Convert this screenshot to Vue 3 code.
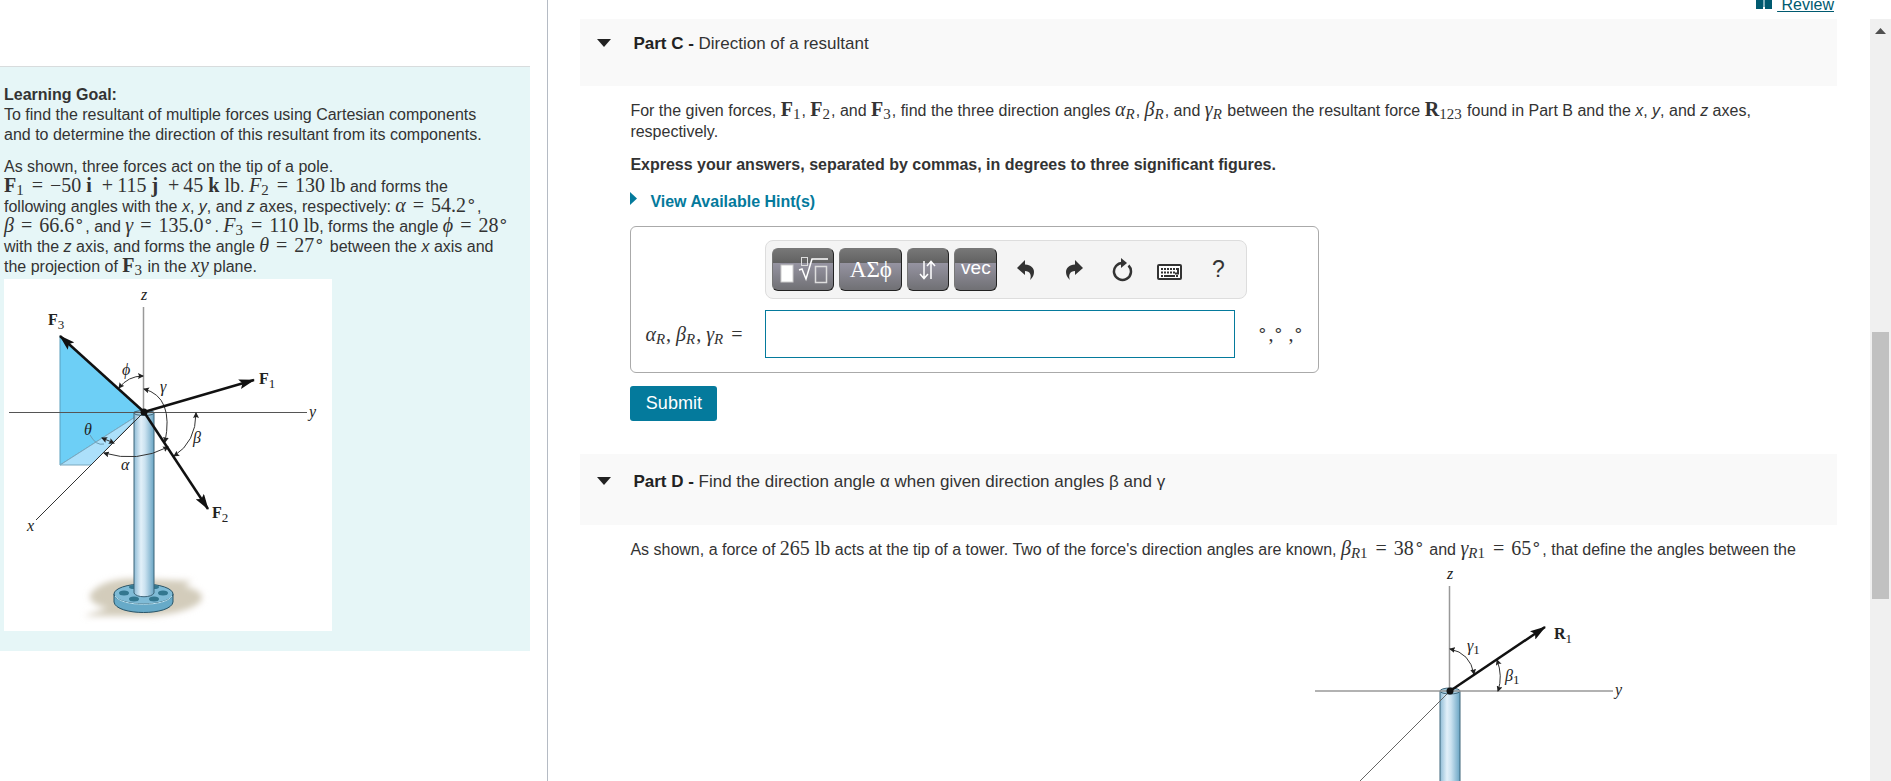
<template>
  <div class="page">
    <aside class="sidebar">
      <section class="goal">
        <h2>Learning Goal:</h2>
        <p>
          To find the resultant of multiple forces using Cartesian components<br />
          and to determine the direction of this resultant from its components.
        </p>
        <p class="problem">
          As shown, three forces act on the tip of a pole.<br />
          <span class="math"><b>F</b><sub>1</sub><span class="rel">=</span>−50 <b>i</b>&nbsp;&nbsp;+&thinsp;115 <b>j</b>&nbsp;&nbsp;+&thinsp;45 <b>k</b> lb</span>.
          <span class="math"><i>F</i><sub>2</sub><span class="rel">=</span>130 lb</span> and forms the<br />
          following angles with the <i>x</i>, <i>y</i>, and <i>z</i> axes, respectively:
          <span class="math"><i>α</i><span class="rel">=</span>54.2<sup>∘</sup></span>,<br />
          <span class="math"><i>β</i><span class="rel">=</span>66.6<sup>∘</sup></span>, and
          <span class="math"><i>γ</i><span class="rel">=</span>135.0<sup>∘</sup></span>.
          <span class="math"><i>F</i><sub>3</sub><span class="rel">=</span>110 lb</span>, forms the angle
          <span class="math"><i>ϕ</i><span class="rel">=</span>28<sup>∘</sup></span><br />
          with the <i>z</i> axis, and forms the angle
          <span class="math"><i>θ</i><span class="rel">=</span>27<sup>∘</sup></span> between the <i>x</i> axis and<br />
          the projection of <span class="math"><b>F</b><sub>3</sub></span> in the <span class="math"><i>xy</i></span> plane.
        </p>
        <svg class="figure" width="328" height="352" viewBox="4 279 328 352">
          <defs>
            <marker id="force" viewBox="0 0 16 10" refX="15" refY="5" markerWidth="16" markerHeight="10" markerUnits="userSpaceOnUse" orient="auto">
              <path d="M0 0L16 5L0 10L3 5Z" fill="#111" />
            </marker>
            <marker id="tick" viewBox="0 0 6 6" refX="5" refY="3" markerWidth="6" markerHeight="6" markerUnits="userSpaceOnUse" orient="auto-start-reverse">
              <path d="M0 0L6 3L0 6L1 3Z" fill="#222" />
            </marker>
            <linearGradient id="steel">
              <stop offset="0" stop-color="#8fbcd6" />
              <stop offset="0.35" stop-color="#e2f0f9" />
              <stop offset="0.55" stop-color="#cbe2f0" />
              <stop offset="1" stop-color="#69a5c4" />
            </linearGradient>
            <filter id="soft" x="-20%" y="-40%" width="140%" height="180%">
              <feGaussianBlur stdDeviation="3" />
            </filter>
          </defs>
          <rect x="4" y="279" width="328" height="352" fill="#fff" />
          <path d="M90 594Q104 577 140 579L192 581L184 586Q208 592 200 602Q188 613 150 616L84 616L108 608Q88 604 90 594Z" fill="#d3ccbb" filter="url(#soft)" />
          <path d="M60 336L143 412L60 465Z" fill="#6dcff6" stroke="#5b9fbd" />
          <path d="M143 412L60 465H91Z" fill="#ace0fa" stroke="#7ba9bf" />
          <path d="M114 594V602C116 616 171 616 173 602V594Z" fill="#67aac8" stroke="#285468" />
          <ellipse cx="143.5" cy="594" rx="29.5" ry="10" fill="#7fbbd6" stroke="#285468" />
          <path d="M115 596C121 607 166 607 172 596" fill="none" stroke="#b9e2f2" />
          <g fill="#33778f">
            <ellipse cx="124" cy="593" rx="5" ry="2.5" />
            <ellipse cx="134" cy="599" rx="5" ry="2.5" />
            <ellipse cx="154" cy="599" rx="5" ry="2.5" />
            <ellipse cx="163" cy="593" rx="5" ry="2.5" />
            <ellipse cx="134" cy="587" rx="5" ry="2" />
            <ellipse cx="154" cy="587" rx="5" ry="2" />
          </g>
          <path d="M134 412V593C136 598 152 598 154 593V412Z" fill="url(#steel)" stroke="#3d6478" />
          <ellipse cx="144" cy="413" rx="10" ry="2.5" fill="#a4cde1" stroke="#3d6478" />
          <g fill="none" stroke="#333">
            <path d="M143.5 307V412" stroke="#999" stroke-width="1.5" />
            <path d="M9 412.5H307" stroke="#555" />
            <path d="M144 412L36 520" />
            <path d="M119 388Q128 376 143 376" marker-start="url(#tick)" marker-end="url(#tick)" />
            <path d="M144 389Q174 397 165 442" marker-start="url(#tick)" marker-end="url(#tick)" />
            <path d="M196 413Q196 442 174 456" marker-start="url(#tick)" marker-end="url(#tick)" />
            <path d="M104 453Q137 463 168 447" marker-start="url(#tick)" marker-end="url(#tick)" />
            <path d="M102 438L114 443" marker-start="url(#tick)" marker-end="url(#tick)" />
            <path d="M90 435Q96 446 104 444" stroke="#6b9db5" />
          </g>
          <g stroke="#111" stroke-width="2.5">
            <path d="M144 412L60 336" marker-end="url(#force)" />
            <path d="M144 412L254 380" marker-end="url(#force)" />
            <path d="M144 412L208 509" marker-end="url(#force)" />
          </g>
          <circle cx="144" cy="412" r="3.5" fill="#111" />
          <g class="label">
            <text class="it" x="141" y="300">z</text>
            <text class="it" x="309" y="417">y</text>
            <text class="it" x="27" y="531">x</text>
            <text x="48" y="325"><tspan class="bold">F</tspan><tspan class="low" dy="4">3</tspan></text>
            <text x="259" y="384"><tspan class="bold">F</tspan><tspan class="low" dy="4">1</tspan></text>
            <text x="212" y="518"><tspan class="bold">F</tspan><tspan class="low" dy="4">2</tspan></text>
            <text class="it" x="122" y="375">ϕ</text>
            <text class="it" x="160" y="392">γ</text>
            <text class="it" x="193" y="443">β</text>
            <text class="it" x="121" y="470">α</text>
            <text class="it" x="84" y="435">θ</text>
          </g>
        </svg>
      </section>
    </aside>

    <main class="content">
      <nav class="links">
        <a href="#review">
          <svg width="16" height="14" viewBox="0 0 16 14"><path d="M0 0H7V14H0ZM9 0H16V14H9Z" fill="#005a70" /><path d="M7 0H9V12H7Z" fill="#7fb0bd" /></svg><span>&nbsp;Review</span>
        </a>
      </nav>

      <section class="part">
        <header class="part-header">
          <button class="toggle" aria-label="Toggle Part C" @click="openC = !openC"><svg width="14" height="8" viewBox="0 0 14 8"><path d="M0 0H14L7 8Z" fill="#222" /></svg></button>
          <h3><b>Part C -</b> Direction of a resultant</h3>
        </header>
        <div v-if="openC" class="part-body">
          <p>
            For the given forces, <span class="math"><b>F</b><sub>1</sub></span>, <span class="math"><b>F</b><sub>2</sub></span>, and <span class="math"><b>F</b><sub>3</sub></span>, find the three direction angles
            <span class="math"><i>α</i><sub><i>R</i></sub></span>, <span class="math"><i>β</i><sub><i>R</i></sub></span>, and <span class="math"><i>γ</i><sub><i>R</i></sub></span>
            between the resultant force <span class="math"><b>R</b><sub>123</sub></span> found in Part B and the <i>x</i>, <i>y</i>, and <i>z</i> axes,<br />
            respectively.
          </p>
          <p class="instruction">Express your answers, separated by commas, in degrees to three significant figures.</p>
          <a class="hint" href="#hints"><svg width="7" height="13" viewBox="0 0 7 13"><path d="M0 0L7 6.5L0 13Z" fill="#047a9c" /></svg>View Available Hint(s)</a>

          <form class="answer" @submit.prevent>
            <div class="toolbar">
              <button type="button" class="key templates" aria-label="Templates">
                <svg width="50" height="30" viewBox="0 0 50 30">
                  <rect x="3" y="10" width="12" height="17" fill="#fff" stroke="#ccc" />
                  <rect x="23.5" y="2.5" width="6" height="8" fill="none" stroke="#ddd" />
                  <path d="M21 15L24 14L28 24L34 4H50" fill="none" stroke="#fff" stroke-width="1.5" />
                  <rect x="37.5" y="11.5" width="11" height="16" fill="none" stroke="#ddd" stroke-width="1.5" />
                </svg>
              </button>
              <button type="button" class="key symbols">ΑΣϕ</button>
              <button type="button" class="key arrows" aria-label="Arrows">
                <svg width="18" height="20" viewBox="0 0 18 20"><path d="M5 1V18M1 14L5 18.5L9 14M12 19V2M8 6L12 1.5L16 6" fill="none" stroke="#fff" stroke-width="1.5" /></svg>
              </button>
              <button type="button" class="key vec">vec</button>
              <button type="button" class="tool" aria-label="Undo">
                <svg width="18" height="20" viewBox="0 0 18 20"><path d="M0 8L8 0V4.5C14 5 17 8 17 12C17 15 16 17 13 20C15 15 13 11 8 11V15Z" fill="#333" /></svg>
              </button>
              <button type="button" class="tool" aria-label="Redo">
                <svg width="18" height="20" viewBox="0 0 18 20"><path d="M18 8L10 0V4.5C4 5 1 8 1 12C1 15 2 17 5 20C3 15 5 11 10 11V15Z" fill="#333" /></svg>
              </button>
              <button type="button" class="tool" aria-label="Reset">
                <svg width="22" height="24" viewBox="0 0 22 24"><path d="M12 5A8.5 8.5 0 1 0 17.5 7.5" fill="none" stroke="#333" stroke-width="2.5" /><path d="M10 0L16 5L10 10Z" fill="#333" /></svg>
              </button>
              <button type="button" class="tool keyboard" aria-label="Keyboard">
                <svg width="26" height="16" viewBox="0 0 26 16">
                  <rect x="1" y="1" width="23" height="14" rx="1" fill="#fff" stroke="#333" stroke-width="2" />
                  <path d="M4 5H20M4 8.5H18" stroke="#333" stroke-width="2" stroke-dasharray="2 1" />
                  <path d="M21 4V9.5H18M4 12H6M7 12H18M19 12H21" fill="none" stroke="#333" stroke-width="2" />
                </svg>
              </button>
              <button type="button" class="tool help">?</button>
            </div>
            <label class="math" for="answer"><i>α</i><sub><i>R</i></sub>, <i>β</i><sub><i>R</i></sub>, <i>γ</i><sub><i>R</i></sub><span class="rel">=</span></label>
            <input id="answer" v-model="answer" type="text" />
            <span class="math units"><sup>∘</sup>,<sup>∘</sup>&thinsp;,<sup>∘</sup></span>
          </form>
          <button class="submit" type="button">Submit</button>
        </div>
      </section>

      <section class="part">
        <header class="part-header tall">
          <button class="toggle" aria-label="Toggle Part D" @click="openD = !openD"><svg width="14" height="8" viewBox="0 0 14 8"><path d="M0 0H14L7 8Z" fill="#222" /></svg></button>
          <h3><b>Part D -</b> Find the direction angle α when given direction angles β and γ</h3>
        </header>
        <div v-if="openD" class="part-body">
          <p>
            As shown, a force of <span class="math">265 lb</span> acts at the tip of a tower. Two of the force's direction angles are known,
            <span class="math"><i>β</i><sub><i>R</i>1</sub><span class="rel">=</span>38<sup>∘</sup></span> and
            <span class="math"><i>γ</i><sub><i>R</i>1</sub><span class="rel">=</span>65<sup>∘</sup></span>, that define the angles between the
          </p>
          <div class="figure-row">
            <svg class="figure" width="340" height="240" viewBox="1300 560 340 240">
              <path d="M1440 691V810H1460V691Z" fill="url(#steel)" stroke="#3d6478" />
              <ellipse cx="1450" cy="691" rx="10" ry="3" fill="#a4cde1" stroke="#3d6478" />
              <g fill="none" stroke="#333">
                <path d="M1449.5 586V691M1315 691H1613" stroke="#999" stroke-width="1.5" />
                <path d="M1450 691L1341 800" stroke="#666" />
                <path d="M1450 649Q1470 653 1474 674" marker-start="url(#tick)" marker-end="url(#tick)" />
                <path d="M1497 660Q1503 676 1498 691" marker-start="url(#tick)" marker-end="url(#tick)" />
              </g>
              <path d="M1450 691L1545 627" stroke="#111" stroke-width="2.5" marker-end="url(#force)" />
              <circle cx="1450" cy="691" r="3.5" fill="#111" />
              <g class="label">
                <text class="it" x="1447" y="579">z</text>
                <text class="it" x="1615" y="695">y</text>
                <text x="1554" y="639"><tspan class="bold">R</tspan><tspan class="low" dy="4">1</tspan></text>
                <text x="1467" y="651"><tspan class="it">γ</tspan><tspan class="low" dy="3">1</tspan></text>
                <text x="1505" y="681"><tspan class="it">β</tspan><tspan class="low" dy="3">1</tspan></text>
              </g>
            </svg>
          </div>
        </div>
      </section>
    </main>

    <div class="scrollbar">
      <svg width="11" height="6" viewBox="0 0 11 6"><path d="M0 6L5.5 0L11 6Z" fill="#505050" /></svg>
      <div class="thumb"></div>
    </div>
  </div>
</template>

<script setup>
import { ref } from 'vue'

const answer = ref('')
const openC = ref(true)
const openD = ref(true)
</script>

<style>
body {
  margin: 0;
  overflow: hidden;
}
</style>

<style scoped>
.page {
  display: flex;
  height: 100vh;
  overflow: hidden;
  background: #fff;
  color: #333;
  font-family: "Liberation Sans", Arial, sans-serif;
  font-size: 16px;
  line-height: 20px;
}
h2, h3, p {
  margin: 0;
  font-size: 16px;
}
.sidebar {
  flex: 0 0 29%;
  box-sizing: border-box;
  padding: 66px 17px 0 0;
  border-right: 1px solid #b5bbc4;
}
.goal {
  padding: 18px 0 20px 4px;
  border-top: 1px solid #d8dcdd;
  background: #e6f6f7;
  white-space: nowrap;
}
.problem {
  margin-top: 12px;
}
.figure {
  display: block;
}
.goal .figure {
  margin-top: 2px;
}
.math {
  font-family: "Liberation Serif", "Times New Roman", serif;
  font-size: 20px;
  line-height: 16px;
  white-space: nowrap;
}
.math sub, .math sup {
  line-height: 0;
}
.math sub {
  margin-right: 1px;
  font-size: 15px;
  vertical-align: -3px;
}
.math sup {
  font-size: 17px;
  vertical-align: 6px;
}
.rel {
  margin: 0 7px;
}
.label {
  font-family: "Liberation Serif", "Times New Roman", serif;
  font-size: 16px;
  fill: #222;
}
.it {
  font-style: italic;
}
.bold {
  font-weight: bold;
}
.low {
  font-size: 13px;
}
.content {
  flex: 1;
  min-width: 0;
  padding: 0 33px 0 32px;
}
.links {
  display: flex;
  justify-content: flex-end;
  align-items: flex-end;
  height: 19px;
  padding-right: 3px;
}
.links a {
  display: flex;
  gap: 5px;
  margin-bottom: 4px;
  color: #005a70;
  text-decoration: none;
}
.links span {
  text-decoration: underline;
}
.part-header {
  display: flex;
  align-items: flex-start;
  box-sizing: border-box;
  height: 67px;
  padding: 15px 17px;
  background: #f9f9f9;
}
.part-header.tall {
  height: 71px;
  padding-top: 18px;
}
h3 {
  font-size: 17px;
  font-weight: normal;
}
h3 b {
  color: #222;
}
.toggle {
  display: flex;
  width: 36px;
  padding: 5px 0;
  border: none;
  background: none;
  cursor: pointer;
}
.part-body {
  padding: 14px 0 33px 50px;
}
.part-body p {
  line-height: 21px;
}
.part-body .instruction {
  margin-top: 12px;
  font-weight: bold;
}
.hint {
  display: flex;
  gap: 13px;
  margin-top: 17px;
  color: #047a9c;
  font-weight: bold;
  text-decoration: none;
}
.answer {
  display: grid;
  grid-template-columns: 120px 470px 1fr;
  row-gap: 11px;
  align-items: center;
  box-sizing: border-box;
  max-width: 689px;
  margin-top: 14px;
  padding: 13px 14px 14px;
  border: 1px solid #aaa;
  border-radius: 6px;
}
.toolbar {
  grid-column: 2 / 4;
  justify-self: start;
  display: flex;
  align-items: center;
  height: 57px;
  padding: 0 4px 0 6px;
  border: 1px solid #ddd;
  border-radius: 8px;
  background: #f4f4f4;
}
.key {
  display: flex;
  align-items: center;
  justify-content: center;
  box-sizing: border-box;
  height: 43px;
  margin-right: 5px;
  padding: 0;
  border: 1px solid #777;
  border-right-color: #222;
  border-bottom-color: #222;
  border-radius: 6px;
  background: linear-gradient(#777, #626262 33%, #9694a2 33%, #707074);
  color: #fff;
  cursor: pointer;
}
.templates {
  width: 62px;
}
.symbols {
  width: 63px;
  font-family: "Liberation Serif", "Times New Roman", serif;
  font-size: 23px;
}
.arrows {
  width: 42px;
}
.vec {
  width: 43px;
  padding-bottom: 4px;
  font-family: "Liberation Sans", Arial, sans-serif;
  font-size: 19px;
}
.tool {
  display: flex;
  align-items: center;
  justify-content: center;
  width: 48px;
  height: 40px;
  padding: 0;
  border: none;
  background: none;
  color: #333;
  cursor: pointer;
}
.keyboard {
  padding-top: 5px;
}
.help {
  font-family: "Liberation Sans", Arial, sans-serif;
  font-size: 23px;
}
.answer input {
  box-sizing: border-box;
  width: 100%;
  height: 48px;
  padding: 0 8px;
  border: 1px solid #047a9c;
  font-size: 18px;
  outline: none;
}
.units {
  padding-left: 22px;
}
.submit {
  width: 87px;
  height: 35px;
  margin-top: 13px;
  border: none;
  border-radius: 3px;
  background: #047a9c;
  color: #fff;
  font-family: "Liberation Sans", Arial, sans-serif;
  font-size: 18px;
  cursor: pointer;
}
.figure-row {
  display: flex;
  justify-content: flex-end;
  padding-right: 197px;
}
.scrollbar {
  flex: 0 0 17px;
  display: flex;
  flex-direction: column;
  align-items: center;
  margin-top: 19px;
  padding: 9px 2px 0;
  background: #f0f0f0;
}
.thumb {
  width: 17px;
  height: 267px;
  margin-top: 298px;
  background: #c1c1c1;
}
</style>
